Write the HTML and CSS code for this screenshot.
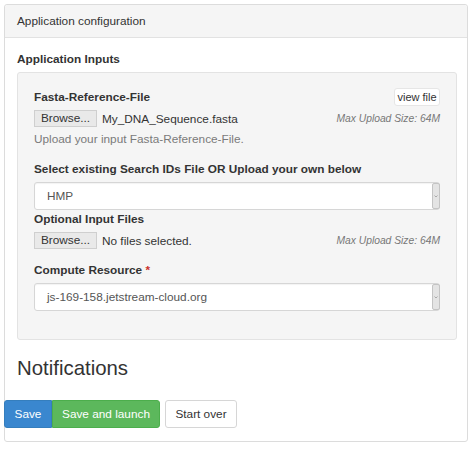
FILE: index.html
```html
<!DOCTYPE html>
<html>
<head>
<meta charset="utf-8">
<link rel="stylesheet" href="styles.css">
</head>
<body>
<div class="panel">
  <div class="panel-heading">Application configuration</div>
  <div class="panel-body">
    <div class="section">
      <h4 class="section-title">Application Inputs</h4>
      <div class="well">
        <div class="row row-label">
          <span class="label">Fasta-Reference-File</span>
          <span class="btn-view">view file</span>
        </div>
        <div class="row row-file">
          <span class="browse">Browse...</span>
          <span class="filename">My_DNA_Sequence.fasta</span>
          <span class="max">Max Upload Size: 64M</span>
        </div>
        <div class="help">Upload your input Fasta-Reference-File.</div>

        <div class="label label-gap">Select existing Search IDs File OR Upload your own below</div>
        <div class="select">
          <span class="select-text">HMP</span>
          <span class="select-arrow"><svg width="4" height="3" viewBox="0 0 4 3"><path d="M0.5 0.5 L2 2 L3.5 0.5" fill="none" stroke="#999" stroke-width="0.8"/></svg></span>
        </div>
        <div class="label label-tight">Optional Input Files</div>
        <div class="row row-file row-file2">
          <span class="browse">Browse...</span>
          <span class="filename">No files selected.</span>
          <span class="max">Max Upload Size: 64M</span>
        </div>

        <div class="label label-gap2">Compute Resource <span class="req">*</span></div>
        <div class="select">
          <span class="select-text">js-169-158.jetstream-cloud.org</span>
          <span class="select-arrow"><svg width="4" height="3" viewBox="0 0 4 3"><path d="M0.5 0.5 L2 2 L3.5 0.5" fill="none" stroke="#999" stroke-width="0.8"/></svg></span>
        </div>
      </div>
      <h3 class="notifications">Notifications</h3>
    </div>
    <div class="actions">
      <div class="btn-group">
        <span class="btn btn-primary">Save</span>
        <span class="btn btn-success">Save and launch</span>
      </div>
      <span class="btn btn-default">Start over</span>
    </div>
  </div>
</div>
</body>
</html>
```
FILE: styles.css
```css
* { box-sizing: border-box; }
html, body { margin: 0; padding: 0; background: #fff; }
body {
  padding: 4px 0 0 4px;
  font-family: "Liberation Sans", Arial, Helvetica, sans-serif;
  font-size: 11.8px;
  color: #333;
}
.panel {
  width: 464px;
  height: 438px;
  border: 1px solid #dcdcdc;
  border-radius: 3px;
  background: #fff;
}
.panel-heading {
  height: 33px;
  background: #f5f5f5;
  border-bottom: 1px solid #e2e2e2;
  padding: 0 12px;
  line-height: 32px;
  border-radius: 3px 3px 0 0;
}
.panel-body {
  padding-top: 13px;
}
.section {
  padding: 0 10px 0 12px;
}
.section-title {
  margin: 0 0 5px 0;
  font-size: 11.8px;
  font-weight: bold;
  line-height: 16px;
}
.well {
  background: #f5f5f5;
  border: 1px solid #e3e3e3;
  border-radius: 3px;
  padding: 15px 16px 28px 16px;
  height: 268px;
}
.row {
  display: flex;
  align-items: center;
}
.row-label {
  height: 18px;
  justify-content: space-between;
}
.label {
  font-weight: bold;
  line-height: 16px;
}
.btn-view {
  height: 18px;
  width: 46px;
  background: #fff;
  border: 1px solid #e6e6e6;
  border-radius: 3px;
  font-size: 11px;
  line-height: 16px;
  text-align: center;
}
.row-file {
  margin-top: 4px;
  height: 17px;
}
.row-file2 {
  margin-top: 5px;
}
.browse {
  width: 63px;
  height: 17px;
  background: #e9e9e9;
  border: 1px solid #cfcfcf;
  line-height: 15px;
  text-align: center;
  color: #333;
}
.filename {
  margin-left: 5px;
  flex: 1;
}
.max {
  font-style: italic;
  color: #777;
  font-size: 10.3px;
}
.help {
  margin-top: 4px;
  line-height: 16px;
  color: #7a7a7a;
}
.label-gap {
  margin-top: 14px;
}
.label-tight {
  margin-top: 1px;
}
.label-gap2 {
  margin-top: 13px;
}
.req {
  color: #c9302c;
}
.select {
  margin-top: 5px;
  height: 28px;
  background: #fff;
  border: 1px solid #d6d6d6;
  border-radius: 3px;
  box-shadow: inset 0 1px 1px rgba(0,0,0,0.05);
  display: flex;
  align-items: center;
  justify-content: space-between;
  padding-left: 12px;
}
.select-text {
  color: #555;
}
.select-arrow {
  width: 8px;
  height: 26px;
  margin-right: -1px;
  background: #e4e4e4;
  border: 1px solid #c4c4c4;
  border-radius: 2px;
  display: flex;
  align-items: center;
  justify-content: center;
}
.notifications {
  margin: 16px 0 0 0;
  font-size: 20.4px;
  font-weight: normal;
  line-height: 24px;
  color: #333;
}
.actions {
  margin-top: 20px;
  margin-left: -1px;
  display: flex;
  gap: 5px;
}
.btn-group {
  display: flex;
}
.btn {
  height: 28px;
  line-height: 26px;
  font-size: 11.8px;
  border: 1px solid transparent;
  text-align: center;
}
.btn-primary {
  width: 48px;
  background: #3a87cf;
  border-color: #357ebd;
  color: #fff;
  border-radius: 3px 0 0 3px;
}
.btn-success {
  width: 108px;
  background: #5cb85c;
  border-color: #4cae4c;
  color: #fff;
  border-radius: 0 3px 3px 0;
}
.btn-default {
  width: 72px;
  background: #fff;
  border-color: #d6d6d6;
  color: #333;
  border-radius: 3px;
}
```
